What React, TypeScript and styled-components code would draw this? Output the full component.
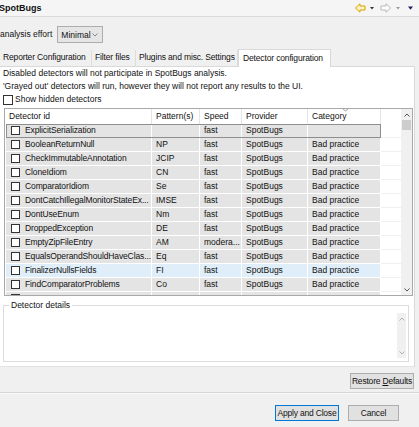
import React from 'react';
import styled, { createGlobalStyle, css } from 'styled-components';

const GlobalStyle = createGlobalStyle`
  html, body {
    margin: 0;
    padding: 0;
    background: #f0f0f0;
  }
  body {
    font-family: "Liberation Sans", Arial, sans-serif;
    font-size: 8.5px;
    color: #111;
  }
  #root {
    width: 419px;
    height: 427px;
    overflow: hidden;
  }
`;

interface Detector {
  id: string;
  pattern: string;
  speed: string;
  provider: string;
  category: string;
}

const detectors: Detector[] = [
  { id: 'ExplicitSerialization', pattern: '', speed: 'fast', provider: 'SpotBugs', category: '' },
  { id: 'BooleanReturnNull', pattern: 'NP', speed: 'fast', provider: 'SpotBugs', category: 'Bad practice' },
  { id: 'CheckImmutableAnnotation', pattern: 'JCIP', speed: 'fast', provider: 'SpotBugs', category: 'Bad practice' },
  { id: 'CloneIdiom', pattern: 'CN', speed: 'fast', provider: 'SpotBugs', category: 'Bad practice' },
  { id: 'ComparatorIdiom', pattern: 'Se', speed: 'fast', provider: 'SpotBugs', category: 'Bad practice' },
  { id: 'DontCatchIllegalMonitorStateEx...', pattern: 'IMSE', speed: 'fast', provider: 'SpotBugs', category: 'Bad practice' },
  { id: 'DontUseEnum', pattern: 'Nm', speed: 'fast', provider: 'SpotBugs', category: 'Bad practice' },
  { id: 'DroppedException', pattern: 'DE', speed: 'fast', provider: 'SpotBugs', category: 'Bad practice' },
  { id: 'EmptyZipFileEntry', pattern: 'AM', speed: 'modera...', provider: 'SpotBugs', category: 'Bad practice' },
  { id: 'EqualsOperandShouldHaveClas...', pattern: 'Eq', speed: 'fast', provider: 'SpotBugs', category: 'Bad practice' },
  { id: 'FinalizerNullsFields', pattern: 'FI', speed: 'fast', provider: 'SpotBugs', category: 'Bad practice' },
  { id: 'FindComparatorProblems', pattern: 'Co', speed: 'fast', provider: 'SpotBugs', category: 'Bad practice' },
  // only the top edge of the next row shows under the last full one
  { id: '', pattern: '', speed: '', provider: '', category: '' },
];

const COLS = '147px 48px 42px 66px 73px';

const Window = styled.div`
  width: 419px;
  height: 427px;
  display: flex;
  flex-direction: column;
  background: #f0f0f0;
`;

const TitleBar = styled.div`
  height: 16px;
  border-bottom: 1px solid #dadada;
  background: #f5f5f5;
  display: flex;
  align-items: center;
  justify-content: space-between;
  padding-right: 4px;
`;

const Title = styled.div`
  font-weight: bold;
  font-size: 9px;
  margin-left: -1px;
`;

const EffortRow = styled.div`
  height: 32px;
  display: flex;
  align-items: flex-start;
  padding-top: 9px;
  box-sizing: border-box;
  gap: 5px;
`;

const EffortLabel = styled.span`
  line-height: 17px;
`;

const Combo = styled.div`
  width: 46px;
  height: 17px;
  box-sizing: border-box;
  border: 1px solid #adadad;
  background: #e5e5e5;
  display: flex;
  align-items: center;
  justify-content: space-between;
  padding: 0 4px 0 3px;
`;

const TabBar = styled.div`
  height: 17px;
  display: flex;
  align-items: flex-end;
`;

const Tab = styled.div<{ $active?: boolean; $width: number }>`
  width: ${({ $width }) => $width}px;
  height: 16px;
  line-height: 15px;
  padding-left: 3px;
  box-sizing: border-box;
  white-space: nowrap;
  overflow: hidden;
  letter-spacing: -0.15px;
  border-right: 1px solid #dcdcdc;
  ${({ $active }) =>
    $active &&
    css`
      position: relative;
      height: 18px;
      line-height: 17px;
      margin-bottom: -1px;
      background: #fff;
      border: 1px solid #d9d9d9;
      border-bottom: none;
      padding-left: 4px;
    `}
`;

const TabPanel = styled.div`
  width: 415px;
  height: 301px;
  box-sizing: border-box;
  background: #fff;
  border-top: 1px solid #d9d9d9;
  border-right: 1px solid #d9d9d9;
  border-bottom: 1px solid #e3e3e3;
  padding-left: 3px;
  display: flex;
  flex-direction: column;
`;

const Line = styled.div`
  line-height: 13px;
  height: 13px;
  white-space: nowrap;
  display: flex;
  align-items: center;
`;

const Box = styled.span<{ $size?: number }>`
  display: inline-block;
  flex: none;
  width: ${({ $size = 9 }) => $size}px;
  height: ${({ $size = 9 }) => $size}px;
  box-sizing: border-box;
  border: 1px solid #333;
  background: #fff;
`;

const CheckLabel = styled.span`
  margin-left: 2px;
`;

const Table = styled.div`
  margin: 2px 0 0 1px;
  width: 409px;
  height: 188px;
  box-sizing: border-box;
  border: 1px solid #a9a9a9;
  display: flex;
`;

const TableMain = styled.div`
  flex: 1;
  display: flex;
  flex-direction: column;
  overflow: hidden;
`;

const Header = styled.div`
  height: 15px;
  flex: none;
  display: grid;
  grid-template-columns: ${COLS} 1fr;
  background: #fff;
`;

const HeadCell = styled.div<{ $last?: boolean }>`
  position: relative;
  padding-left: 4px;
  line-height: 15px;
  border-right: ${({ $last }) => ($last ? 'none' : '1px solid #e5e5e5')};
`;

const SortMark = styled.svg`
  position: absolute;
  left: 34px;
  top: -1px;
`;

const Body = styled.div`
  flex: 1;
  overflow: hidden;
  padding-left: 1px;
`;

const Row = styled.div`
  display: flex;
  height: 14px;
`;

const RowCells = styled.div<{ $focused?: boolean; $hover?: boolean }>`
  display: grid;
  grid-template-columns: 146px 48px 42px 66px 73px;
  ${({ $focused }) =>
    $focused &&
    css`
      outline: 1px solid #8e8e8e;
      outline-offset: -1px;
    `}
  & > div {
    background: ${({ $hover }) => ($hover ? '#e0eefa' : '#e4e4e4')};
  }
`;

const Cell = styled.div<{ $first?: boolean }>`
  box-sizing: border-box;
  height: 14px;
  line-height: 13px;
  border-right: 1px solid #fff;
  border-bottom: 1px solid #fff;
  padding-left: ${({ $first }) => ($first ? '5px' : '4px')};
  letter-spacing: ${({ $first }) => ($first ? '-0.12px' : '0')};
  white-space: nowrap;
  overflow: hidden;
  display: flex;
  align-items: center;
  gap: 5px;
`;

const Filler = styled.div`
  flex: 1;
  height: 14px;
  box-sizing: border-box;
  border-bottom: 1px solid #f0f0f0;
`;

const VScroll = styled.div<{ $width: number }>`
  width: ${({ $width }) => $width}px;
  flex: none;
  background: #f0f0f0;
  display: flex;
  flex-direction: column;
  align-items: center;
`;

const ArrowBox = styled.div`
  height: 11px;
  width: 100%;
  display: flex;
  align-items: center;
  justify-content: center;
`;

const Thumb = styled.div`
  width: 9px;
  height: 10px;
  background: #cdcdcd;
`;

const Spacer = styled.div`
  flex: 1;
`;

const Group = styled.fieldset`
  margin: 3px 0 0 0;
  width: 406px;
  box-sizing: border-box;
  border: 1px solid #dcdcdc;
  padding: 0 0 0 5px;
  min-width: 0;
`;

const Legend = styled.legend`
  padding: 0 2px;
  line-height: 12px;
`;

const DetailsArea = styled.div`
  margin: 2px 2px 3px 0;
  height: 45px;
  display: flex;
  justify-content: flex-end;
`;

const RestoreRow = styled.div`
  display: flex;
  justify-content: flex-end;
  padding: 6px 5px 0 0;
`;

const Button = styled.button<{ $width: number; $primary?: boolean }>`
  width: ${({ $width }) => $width}px;
  height: 16px;
  padding: 0;
  box-sizing: border-box;
  font: inherit;
  letter-spacing: -0.2px;
  color: #111;
  white-space: nowrap;
  overflow: hidden;
  background: #e1e1e1;
  border: 1px solid ${({ $primary }) => ($primary ? '#0078d7' : '#adadad')};
  border-radius: 0;
`;

const Separator = styled.div`
  margin-top: 3px;
  border-top: 1px solid #d5d5d5;
  border-bottom: 1px solid #fafafa;
`;

const ButtonRow = styled.div`
  display: flex;
  justify-content: flex-end;
  gap: 9px;
  padding: 11px 20px 0 0;
`;

function NavIcons() {
  return (
    <svg width="60" height="10" viewBox="0 0 60 10">
      <polygon
        points="0.5,5 5,0.8 5,3 10,3 10,7 5,7 5,9.2"
        fill="#fff3bf"
        stroke="#d8a200"
        strokeWidth="1"
      />
      <polygon points="15,4 19,4 17,6.5" fill="#333" />
      <polygon
        points="35.5,5 31,0.8 31,3 26,3 26,7 31,7 31,9.2"
        fill="#fff"
        stroke="#b9b9b9"
        strokeWidth="1"
      />
      <polygon points="41,4 45,4 43,6.5" fill="#9a9a9a" />
      <polygon points="53,3.5 58,3.5 55.5,6.8" fill="#22226a" />
    </svg>
  );
}

function Chevron({ up, color = '#6a6a6a' }: { up?: boolean; color?: string }) {
  return (
    <svg width="6" height="4" viewBox="0 0 6 4">
      <polyline
        points={up ? '0.5,3.5 3,1 5.5,3.5' : '0.5,0.5 3,3 5.5,0.5'}
        fill="none"
        stroke={color}
        strokeWidth="1"
      />
    </svg>
  );
}

export default function App() {
  return (
    <Window>
      <GlobalStyle />
      <TitleBar>
        <Title>SpotBugs</Title>
        <NavIcons />
      </TitleBar>

      <EffortRow>
        <EffortLabel>analysis effort</EffortLabel>
        <Combo>
          <span>Minimal</span>
          <Chevron color="#888" />
        </Combo>
      </EffortRow>

      <TabBar>
        <Tab $width={92}>Reporter Configuration</Tab>
        <Tab $width={44}>Filter files</Tab>
        <Tab $width={102}>Plugins and misc. Settings</Tab>
        <Tab $width={93} $active>
          Detector configuration
        </Tab>
      </TabBar>

      <TabPanel>
        <Line>Disabled detectors will not participate in SpotBugs analysis.</Line>
        <Line>'Grayed out' detectors will run, however they will not report any results to the UI.</Line>
        <Line>
          <Box $size={10} />
          <CheckLabel>Show hidden detectors</CheckLabel>
        </Line>

        <Table>
          <TableMain>
            <Header>
              <HeadCell>Detector id</HeadCell>
              <HeadCell>Pattern(s)</HeadCell>
              <HeadCell>Speed</HeadCell>
              <HeadCell>Provider</HeadCell>
              <HeadCell>
                Category
                <SortMark width="7" height="4" viewBox="0 0 7 4">
                  <polyline points="0.5,0.5 3.5,3 6.5,0.5" fill="none" stroke="#9a9a9a" strokeWidth="1" />
                </SortMark>
              </HeadCell>
              <HeadCell $last />
            </Header>
            <Body>
              {detectors.map((d, i) => (
                <Row key={i}>
                  <RowCells $focused={i === 0} $hover={i === 10}>
                    <Cell $first>
                      <Box />
                      {d.id}
                    </Cell>
                    <Cell>{d.pattern}</Cell>
                    <Cell>{d.speed}</Cell>
                    <Cell>{d.provider}</Cell>
                    <Cell>{d.category}</Cell>
                  </RowCells>
                  <Filler />
                </Row>
              ))}
            </Body>
          </TableMain>
          <VScroll $width={11}>
            <ArrowBox>
              <Chevron up color="#555" />
            </ArrowBox>
            <Thumb />
            <Spacer />
            <ArrowBox>
              <Chevron color="#555" />
            </ArrowBox>
          </VScroll>
        </Table>

        <Group>
          <Legend>Detector details</Legend>
          <DetailsArea>
            <VScroll $width={9}>
              <ArrowBox>
                <Chevron up color="#b0b0b0" />
              </ArrowBox>
              <Spacer />
              <ArrowBox>
                <Chevron color="#b0b0b0" />
              </ArrowBox>
            </VScroll>
          </DetailsArea>
        </Group>
      </TabPanel>

      <RestoreRow>
        <Button $width={64}>
          Restore <u>D</u>efaults
        </Button>
      </RestoreRow>
      <Separator />
      <ButtonRow>
        <Button $width={64} $primary>
          Apply and Close
        </Button>
        <Button $width={51}>Cancel</Button>
      </ButtonRow>
    </Window>
  );
}
